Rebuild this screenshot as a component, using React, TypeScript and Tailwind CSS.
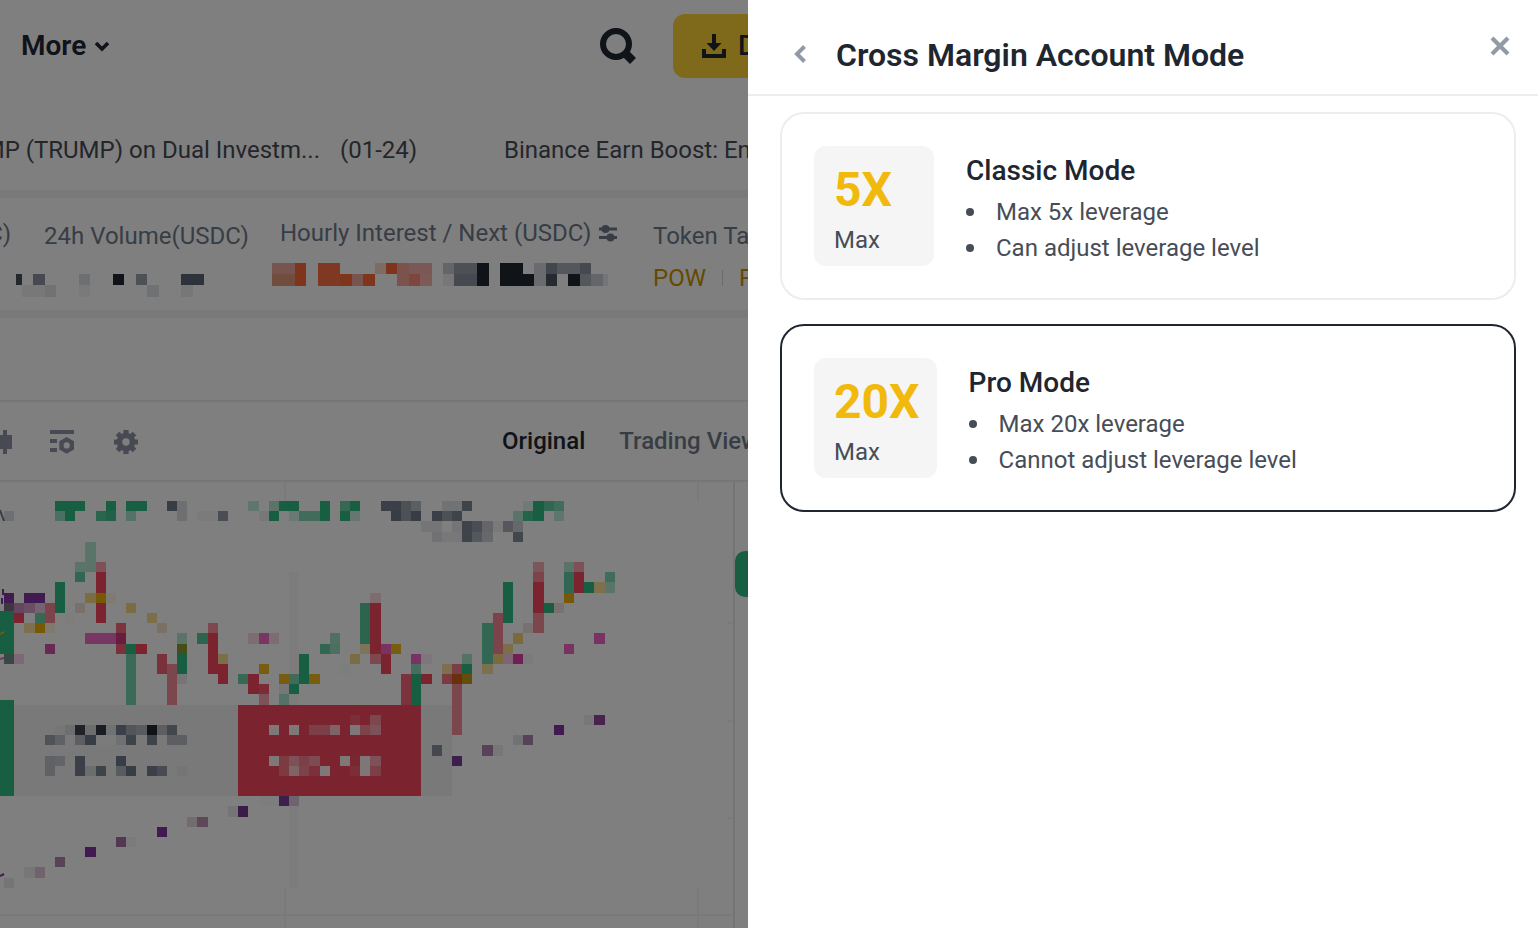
import { useState } from 'react';

type Cell = [x: number, y: number, w: number, h: number, tone: string, opacity?: number];

const GREEN = '#2ebd85';
const RED = '#f6465d';
const GOLD = '#eeb30a';
const PINK = '#f066c4';
const PURPLE = '#8234a4';
const INK = '#202630';
const SLATE = '#707a8a';
const WHITE = '#ffffff';
const CORAL = '#ff6838';

const legendCells: Cell[] = [
  [5, 0, 3, 1, GREEN], [10, 0, 1, 1, GREEN], [12, 0, 2, 1, GREEN], [16, 0, 1, 1, SLATE], [17, 0, 1, 2, SLATE, 0.25],
  [24, 0, 1, 1, GREEN, 0.3], [26, 0, 1, 1, GREEN, 0.35], [27, 0, 2, 1, GREEN],
  [0, 1, 1, 1, SLATE, 0.25], [5, 1, 1, 1, GREEN, 0.5], [6, 1, 1, 1, GREEN], [9, 1, 1, 1, GREEN, 0.8], [10, 1, 1, 1, GREEN, 0.9],
  [12, 1, 1, 1, GREEN, 0.4], [19, 1, 2, 1, SLATE, 0.06], [21, 1, 1, 1, SLATE, 0.75], [25, 1, 1, 1, SLATE, 0.1],
  [26, 1, 1, 1, GREEN], [28, 1, 1, 1, GREEN, 0.2], [29, 1, 2, 1, GREEN, 0.6],
  [31, 0, 1, 2, GREEN], [33, 0, 1, 1, GREEN, 0.7], [34, 0, 1, 1, GREEN], [33, 1, 1, 1, GREEN], [34, 1, 1, 1, GREEN, 0.25],
  [37, 0, 2, 1, SLATE, 0.95], [39, 0, 1, 1, SLATE, 0.7], [40, 0, 1, 1, SLATE, 0.5], [38, 1, 1, 1, SLATE], [39, 1, 1, 1, SLATE, 0.7],
  [40, 1, 1, 1, SLATE], [42, 1, 1, 1, SLATE, 0.95], [43, 1, 1, 1, SLATE, 0.7], [44, 1, 1, 1, SLATE, 0.9],
  [43, 0, 2, 1, SLATE, 0.2], [45, 0, 1, 1, SLATE, 0.9], [41, 2, 2, 1, SLATE, 0.15], [44, 2, 1, 1, SLATE, 0.15],
  [45, 2, 1, 2, SLATE, 0.9], [46, 2, 1, 1, SLATE, 0.75], [47, 2, 1, 1, SLATE, 0.4], [48, 2, 1, 1, SLATE, 0.08],
  [49, 2, 1, 1, SLATE, 0.6], [50, 2, 1, 1, SLATE, 0.35], [42, 3, 1, 1, SLATE, 0.22], [43, 3, 2, 1, SLATE, 0.1],
  [46, 3, 1, 1, SLATE, 0.6], [47, 3, 1, 1, SLATE, 0.35], [50, 3, 1, 1, SLATE, 0.85],
  [51, 0, 1, 1, GREEN, 0.15], [52, 0, 1, 2, GREEN], [53, 0, 1, 1, GREEN, 0.75], [54, 0, 1, 1, GREEN, 0.6],
  [50, 1, 1, 1, GREEN, 0.35], [51, 1, 1, 1, GREEN, 0.85], [54, 1, 1, 1, GREEN, 0.3],
];

const candleCells: Cell[] = [
  [8, 4, 1, 2, GREEN, 0.35], [7, 6, 2, 1, GREEN, 0.35], [9, 6, 1, 1, RED, 0.5], [7, 7, 1, 1, GREEN, 0.75], [9, 7, 1, 5, RED],
  [5, 8, 1, 3, GREEN], [8, 9, 1, 1, GOLD, 0.5], [9, 9, 1, 1, GOLD], [10, 9, 1, 1, GOLD, 0.1], [7, 10, 1, 1, '#c98a5a', 0.25],
  [0, 9, 1, 1, PURPLE], [2, 9, 2, 1, PURPLE], [0, 10, 1, 1, '#5a4a66', 0.8], [1, 10, 1, 1, '#b0509a', 0.65],
  [2, 10, 1, 1, '#b0509a', 0.55], [3, 10, 1, 1, '#b0509a', 0.3], [4, 10, 1, 2, RED, 0.65], [1, 11, 1, 1, RED],
  [3, 11, 1, 1, GREEN, 0.7], [2, 12, 1, 1, GOLD, 0.4], [3, 12, 1, 1, GOLD], [4, 12, 1, 1, GOLD, 0.15], [6, 11, 1, 1, GOLD, 0.05],
  [-1, 10.8, 2, 4.2, GREEN], [0, 15, 1, 1, '#3c6e5c', 0.75], [1, 15, 1, 1, PINK, 0.3], [4, 14, 1, 1, '#d040a0', 0.9],
  [12, 10, 1, 1, GOLD, 0.5], [14, 11, 1, 1, GOLD, 0.45], [15, 12, 1, 1, '#e0b060', 0.35], [8, 13, 3, 1, PINK, 0.95],
  [11, 12, 1, 1, RED, 0.8], [11, 13, 1, 1, '#d03880'], [11, 14, 1, 1, RED, 0.85], [12, 14, 1, 1, GREEN], [13, 14, 1, 1, RED],
  [12, 15, 1, 5, GREEN, 0.65], [15, 15, 1, 2, RED, 0.85], [16, 16, 1, 4, RED, 0.62], [17, 13, 1, 1, GREEN, 0.35],
  [17, 14, 1, 1, '#8a9a30'], [17, 15, 1, 2, GREEN], [17, 17, 1, 1, SLATE, 0.15], [19, 13, 1, 1, GREEN, 0.8],
  [20, 12, 1, 1, RED, 0.6], [20, 13, 1, 4, RED], [21, 15, 1, 1, GOLD, 0.45], [21, 16, 1, 2, RED],
  [23, 17, 1, 1, GREEN, 0.7], [24, 17, 1, 2, RED], [25, 18, 1, 1, RED, 0.9], [25, 19, 1, 1, RED, 0.5],
  [24, 13, 1, 1, RED, 0.2], [25, 13, 1, 1, PINK, 0.95], [26, 13, 1, 1, RED, 0.2], [25, 16, 1, 1, GOLD, 0.9],
  [27, 17, 1, 1, GOLD, 0.9], [28, 17, 1, 1, GREEN, 0.6], [29, 15, 1, 3, GREEN], [30, 17, 1, 1, GOLD, 0.9],
  [27, 18, 1, 1, SLATE, 0.12], [28, 18, 1, 1, GREEN], [27, 19, 1, 1, GREEN, 0.4], [32, 13, 1, 1, GREEN, 0.45],
  [31, 14, 1, 1, GREEN, 0.75], [32, 14, 1, 1, GREEN, 0.5], [35, 10, 1, 4, GREEN, 0.8], [36, 9, 1, 1, RED, 0.2],
  [36, 10, 1, 5, RED], [35, 14, 1, 1, GOLD, 0.3], [37, 14, 1, 1, PINK], [38, 14, 1, 1, GOLD, 0.9], [34, 15, 1, 1, GOLD, 0.5],
  [36, 15, 1, 1, RED, 0.6], [37, 15, 1, 2, RED], [33, 16, 1, 1, SLATE, 0.04], [40, 15, 1, 1, PINK], [41, 15, 1, 1, PINK, 0.12],
  [40, 16, 1, 1, GREEN, 0.55], [39, 17, 1, 3, RED, 0.82], [40, 17, 1, 3, GREEN], [41, 17, 1, 1, RED],
  [43, 16, 1, 1, GOLD, 0.4], [44, 16, 1, 1, RED, 0.7], [45, 15, 1, 1, GREEN, 0.4], [45, 16, 1, 1, GREEN],
  [43, 17, 1, 1, RED, 0.75], [44, 17, 1, 1, '#d06018'], [45, 17, 1, 1, '#c89a10'],
  [52, 6, 1, 1, RED, 0.45], [52, 7, 1, 1, RED, 0.65], [52, 8, 1, 3, RED], [52, 11, 1, 2, RED, 0.62],
  [55, 6, 1, 1, GREEN, 0.35], [56, 6, 1, 1, RED, 0.5], [55, 7, 1, 2, GREEN, 0.75], [56, 7, 1, 2, RED], [57, 8, 1, 1, GREEN],
  [58, 8, 1, 1, GOLD, 0.4], [59, 7, 1, 1, GREEN, 0.6], [59, 8, 1, 1, GREEN, 0.35], [55, 9, 1, 1, GOLD], [53, 10, 1, 1, GREEN],
  [54, 10, 1, 1, '#d09080', 0.25], [49, 8, 1, 4, GREEN], [48, 11, 1, 4, RED, 0.65], [47, 12, 1, 4, GREEN, 0.72],
  [51, 12, 1, 1, '#d09080', 0.25], [50, 13, 1, 1, GOLD, 0.55], [49, 14, 1, 1, GOLD, 0.45], [48, 15, 1, 1, GOLD, 0.55],
  [49, 15, 1, 1, PINK, 0.35], [50, 15, 1, 1, '#e040a8'], [51, 15, 1, 1, SLATE, 0.06], [47, 16, 1, 1, GOLD, 0.4],
  [58, 13, 1, 1, PINK], [55, 14, 1, 1, PINK],
];

const tradeCells: Cell[] = [
  [1, 20, 22, 9, '#f3f3f3'], [41, 20, 3, 9, '#f3f3f3'], [-1, 19.5, 2, 9.5, GREEN], [23, 20, 18, 9, RED],
  [44, 18, 1, 5, RED, 0.62], [42, 24, 1, 1, SLATE, 0.8],
  [5, 22, 1, 1, SLATE, 0.05], [6, 22, 1, 1, SLATE, 0.18], [7, 22, 1, 1, INK, 0.85], [8, 22, 1, 1, SLATE, 0.2],
  [9, 22, 1, 1, INK, 0.9], [10, 22, 1, 1, SLATE, 0.12], [11, 22, 1, 1, SLATE, 0.95], [12, 22, 1, 1, SLATE, 0.6],
  [13, 22, 1, 1, SLATE, 0.5], [14, 22, 1, 1, INK], [15, 22, 1, 1, SLATE, 0.45], [16, 22, 1, 1, SLATE, 0.85],
  [4, 23, 1, 1, SLATE, 0.65], [5, 23, 1, 1, SLATE, 0.4], [7, 23, 1, 1, SLATE, 0.45], [8, 23, 1, 1, SLATE],
  [9, 23, 2, 1, WHITE, 0.3], [11, 23, 1, 1, SLATE, 0.15], [12, 23, 1, 1, SLATE, 0.9], [14, 23, 1, 1, SLATE, 0.9],
  [16, 23, 2, 1, SLATE, 0.45], [4, 25, 1, 2, SLATE, 0.4], [5, 25, 1, 1, SLATE, 0.35], [7, 25, 1, 2, SLATE, 0.95],
  [11, 25, 1, 1, SLATE], [8, 26, 1, 1, SLATE, 0.2], [9, 26, 1, 1, SLATE, 0.9], [11, 26, 1, 1, SLATE, 0.5],
  [12, 26, 1, 1, SLATE], [14, 26, 1, 1, SLATE, 0.95], [15, 26, 1, 1, SLATE, 0.75], [17, 26, 1, 1, SLATE, 0.06],
  [34, 21, 1, 1, WHITE, 0.12], [36, 21, 1, 1, WHITE, 0.4], [26, 22, 1, 1, WHITE, 0.92], [28, 22, 1, 1, WHITE, 0.92],
  [30, 22, 2, 1, WHITE, 0.3], [32, 22, 1, 1, WHITE, 0.7], [34, 22, 1, 1, WHITE, 0.9], [35, 22, 1, 1, WHITE, 0.35],
  [36, 22, 1, 1, WHITE, 0.5], [26, 25, 1, 1, WHITE, 0.92], [27, 25, 1, 1, WHITE, 0.25], [28, 25, 1, 1, WHITE, 0.5],
  [29, 25, 1, 1, WHITE, 0.3], [30, 25, 1, 1, WHITE, 0.45], [33, 25, 1, 1, WHITE, 0.92], [34, 25, 1, 1, WHITE, 0.05],
  [35, 25, 1, 2, WHITE, 0.9], [36, 25, 1, 1, WHITE, 0.5], [27, 26, 1, 1, WHITE, 0.25], [28, 26, 1, 1, WHITE, 0.7],
  [29, 26, 1, 1, WHITE, 0.35], [30, 26, 1, 1, WHITE, 0.15], [31, 26, 1, 1, WHITE, 0.92], [34, 26, 1, 1, WHITE, 0.12],
  [36, 26, 1, 1, WHITE, 0.3],
];

const averageCells: Cell[] = [
  [27, 29, 1, 1, '#7c3c98'], [28, 29, 1, 1, '#b080b0', 0.4], [25, 29, 2, 1, SLATE, 0.04], [22, 30, 1, 1, SLATE, 0.15],
  [23, 30, 1, 1, '#74388c'], [18, 31, 1, 1, '#c0a0b0', 0.4], [19, 31, 1, 1, '#a8689c', 0.75], [15, 32, 1, 1, PURPLE],
  [11, 33, 1, 1, '#9c6098', 0.9], [12, 33, 1, 1, SLATE, 0.07], [8, 34, 1, 1, PURPLE], [5, 35, 1, 1, '#a070a0', 0.85],
  [2, 36, 1, 1, SLATE, 0.12], [3, 36, 1, 1, '#c080b0', 0.45], [0, 37, 1, 1, SLATE, 0.15],
  [44, 25, 1, 1, '#7c3c98'], [47, 24, 1, 1, '#a070a0', 0.85], [48, 24, 1, 1, SLATE, 0.12], [50, 23, 1, 1, SLATE, 0.2],
  [51, 23, 1, 1, '#a070a0', 0.85], [54, 22, 1, 1, PURPLE], [57, 21, 1, 1, SLATE, 0.1], [58, 21, 1, 1, '#8c3c98', 0.95],
];

const volumeCells: Cell[] = [
  [0, 0, 0.5, 1, '#484f5c'], [1.5, 0, 1, 1, SLATE, 0.8], [0.5, 1, 2, 1, SLATE, 0.1], [2.5, 1, 1, 1, SLATE, 0.2],
  [5.5, 0, 1, 1, SLATE, 0.25], [5.5, 1, 1, 1, SLATE, 0.08], [8.5, 0, 1, 1, INK], [10.5, 0, 1, 1, SLATE, 0.7],
  [11.5, 1, 1, 1, SLATE, 0.22], [14.5, 0, 2, 1, '#5c6574'], [14.5, 1, 1, 1, SLATE, 0.12],
];

const interestCells: Cell[] = [
  [0, 0, 2, 1, '#f0a8a0'], [0, 1, 2, 1, '#e09a78'], [2, 0, 1, 2, CORAL], [4, 0, 2, 2, CORAL, 0.95], [6, 1, 1, 1, CORAL],
  [7, 1, 1, 1, '#f0a8a0'], [8, 1, 1, 1, CORAL], [9, 0, 1, 1, '#f8d8c8'], [10, 0, 1, 1, CORAL], [11, 0, 1, 2, '#f8a498'],
  [12, 0, 2, 1, '#f6b0ac'], [12, 1, 1, 1, '#fa8e80'], [13, 1, 1, 1, '#f8b4ac'],
  [15, 0, 1, 1, SLATE, 0.4], [15, 1, 1, 1, SLATE, 0.12], [16, 0, 2, 1, SLATE, 0.7], [16, 1, 2, 1, SLATE, 0.8],
  [18, 0, 1, 2, INK], [20, 0, 2, 2, INK], [22, 1, 1, 1, INK], [22, 0, 1, 1, WHITE, 0.3], [23, 0, 1, 2, SLATE, 0.3],
  [24, 0, 1, 1, SLATE, 0.85], [24, 1, 1, 1, '#4c5462'], [25, 0, 2, 1, SLATE, 0.6], [27, 0, 1, 1, SLATE, 0.8],
  [25, 1, 1, 1, WHITE, 0.2], [26, 1, 1, 1, INK], [27, 1, 1, 1, SLATE, 0.6], [28, 1, 1, 1, SLATE, 0.4], [29, 1, 0.5, 1, SLATE, 0.15],
];

function Cells({ cells }: { cells: Cell[] }) {
  return (
    <>
      {cells.map(([x, y, w, h, tone, opacity], i) => (
        <rect key={i} x={x} y={y} width={w} height={h} fill={tone} opacity={opacity ?? 1} />
      ))}
    </>
  );
}

function Header() {
  return (
    <header className="flex h-[92px] shrink-0 items-center pl-[21px]">
      <button className="flex items-center gap-2 text-[28px] leading-8 font-semibold">
        More
        <svg className="h-4 w-4" viewBox="0 0 16 16" fill="none" stroke="currentColor" strokeWidth="3.6">
          <path d="M2 5l6 6 6-6" />
        </svg>
      </button>
      <button aria-label="Search" className="mr-[37px] ml-auto shrink-0">
        <svg className="h-9 w-9" viewBox="0 0 36 36" fill="none" stroke="currentColor">
          <circle cx="16" cy="16" r="13" strokeWidth="6" />
          <path d="M24.500 24.500l8.500 8.500" strokeWidth="8.500" />
        </svg>
      </button>
      <button className="flex h-16 w-[75px] shrink-0 items-center gap-3 overflow-hidden rounded-l-xl bg-[#fcd535] pl-[29px] text-[28px] leading-8 font-medium">
        <svg className="h-6 w-6 shrink-0" viewBox="0 0 24 24" fill="currentColor">
          <path d="M10 0h4v9h5.500l-7.500 8-7.500-8H10zM0 15h4v5h16v-5h4v9H0z" />
        </svg>
        Download
      </button>
    </header>
  );
}

function NewsTicker() {
  return (
    <div className="flex h-[98px] shrink-0 items-center pt-[18px] text-2xl whitespace-nowrap text-[#474d57]">
      <a href="#dual" className="flex w-[504px] shrink-0 items-center gap-5">
        <span className="flex w-80 justify-end overflow-hidden">MP (TRUMP) on Dual Investm...</span>
        <span>(01-24)</span>
      </a>
      <a href="#boost" className="shrink-0">Binance Earn Boost: Enjoy</a>
    </div>
  );
}

function Stats() {
  return (
    <section className="flex h-32 shrink-0 border-y-8 border-[#f3f3f3] text-2xl whitespace-nowrap text-[#707a8a]">
      <div className="mr-[5px] flex w-[11px] shrink-0 justify-end overflow-hidden pt-5">(USDC)</div>
      <div className="w-[256px] shrink-0 pt-5">
        <div className="pl-7 leading-9">24h Volume(USDC)</div>
        <svg className="mt-5 h-6 w-[190px]" viewBox="0 0 190 24" shapeRendering="crispEdges">
          <g transform="scale(11.4)"><Cells cells={volumeCells} /></g>
        </svg>
      </div>
      <div className="w-[381px] shrink-0 pt-[17px]">
        <div className="flex items-center gap-2 pl-2 leading-9">
          Hourly Interest / Next (USDC)
          <svg className="h-5 w-[18px]" viewBox="0 0 18 20" fill="currentColor">
            <path d="M0 4.500h18v3H0zM0 13h18v3H0z" />
            <circle cx="6.500" cy="6" r="4" />
            <circle cx="11.500" cy="14.500" r="4" />
          </svg>
        </div>
        <svg className="mt-3 h-6 w-[340px]" viewBox="0 0 340 24" shapeRendering="crispEdges">
          <g transform="scale(11.4)"><Cells cells={interestCells} /></g>
        </svg>
      </div>
      <div className="shrink-0 pt-5">
        <div className="leading-9">Token Tags</div>
        <div className="flex items-center gap-4 pt-[6px] leading-9 text-[#c99400]">
          <a href="#pow">POW</a>
          <span className="h-4 w-px bg-[#d0d4da]" />
          <a href="#payments">Payments</a>
        </div>
      </div>
    </section>
  );
}

function ChartToolbar() {
  return (
    <div className="mt-[82px] flex h-[82px] shrink-0 items-center border-y-2 border-[#eaecef] text-[#8f95a6]">
      <div className="flex items-center pt-[2px]">
        <button aria-label="Candles">
          <svg className="h-6 w-3" viewBox="0 0 12 24" fill="currentColor">
            <path d="M3 0h4v5h5v14H7v5H3v-5H0V5h3z" />
          </svg>
        </button>
        <button aria-label="Indicators" className="ml-[38px]">
          <svg className="h-6 w-6" viewBox="0 0 24 24" fill="currentColor">
            <path d="M0 0h24v4H0zM0 9h7v4H0zM0 18h7v4H0z" />
            <path fillRule="evenodd" d="M16.700 7l7.300 4.200v8.300l-7.300 4.300-7.400-4.300v-8.300zM16.700 12.300a3.100 3.100 0 1 0 0 6.200 3.100 3.100 0 0 0 0-6.200z" />
          </svg>
        </button>
        <button aria-label="Chart settings" className="ml-10">
          <svg className="h-6 w-6" viewBox="-12 -12 24 24" fill="currentColor">
            <circle r="6.500" fill="none" stroke="currentColor" strokeWidth="5.600" />
            {[0, 45, 90, 135].map((angle) => (
              <path key={angle} transform={`rotate(${angle})`} d="M-2.600-12h5.200v4h-5.200zM-2.600 8h5.200v4h-5.200z" />
            ))}
          </svg>
        </button>
      </div>
      <div className="ml-auto flex w-[246px] shrink-0 gap-[34px] overflow-hidden text-2xl font-medium whitespace-nowrap">
        <button className="text-[#202630]">Original</button>
        <button className="text-[#707a8a]">Trading View</button>
      </div>
    </div>
  );
}

function Chart() {
  return (
    <svg className="block h-[446px] w-[748px] shrink-0" viewBox="0 482 748 446">
      <g fill="#f4f5f6">
        <path d="M284 482h2v19h-2zM284 888h2v40h-2zM697 482h2v19h-2zM697 888h2v40h-2zM0 914h734v2H0z" />
        <path d="M727 622h6v2h-6zM727 720h6v2h-6zM727 817h6v2h-6z" />
      </g>
      <path d="M733 482h2v446h-2z" fill="#e6e8ec" />
      <path d="M289 572h10v133h-10zM289 796h10v92h-10z" fill="#f9f9f9" />
      <g transform="translate(4 501) scale(10.18)" shapeRendering="crispEdges">
        <Cells cells={legendCells} />
        <Cells cells={tradeCells} />
        <Cells cells={candleCells} />
        <Cells cells={averageCells} />
      </g>
      <g fill="none" strokeWidth="2">
        <path d="M0 510l4 11" stroke={SLATE} />
        <path d="M3 589v6M2 598v6" stroke={PURPLE} />
        <path d="M0 634l4-2" stroke={GOLD} />
        <path d="M0 659l4-1" stroke={PINK} />
        <path d="M0 876l4-2" stroke={PURPLE} />
      </g>
      <rect x="735" y="551" width="40" height="46" rx="10" fill={GREEN} />
    </svg>
  );
}

const modes = [
  { id: 'classic', name: 'Classic Mode', max: '5X', points: ['Max 5x leverage', 'Can adjust leverage level'] },
  { id: 'pro', name: 'Pro Mode', max: '20X', points: ['Max 20x leverage', 'Cannot adjust leverage level'] },
];

function ModeDrawer() {
  const [selected, setSelected] = useState('pro');

  return (
    <aside className="w-[790px] shrink-0 bg-white text-[#202630]">
      <div className="flex h-24 border-b-2 border-[#ededed] pr-[26px] pl-10">
        <div className="flex flex-1 items-center gap-6 pt-4">
          <button aria-label="Back" className="text-[#929aa5]">
            <svg className="h-6 w-6" viewBox="0 0 24 24" fill="none" stroke="currentColor" strokeWidth="4">
              <path d="M16.500 3.500L9 11l7.500 7.500" />
            </svg>
          </button>
          <h2 className="text-[32px] leading-10 font-semibold">Cross Margin Account Mode</h2>
        </div>
        <button aria-label="Close" className="mt-[34px] self-start text-[#929aa5]">
          <svg className="h-6 w-6" viewBox="0 0 24 24" fill="none" stroke="currentColor" strokeWidth="4.200">
            <path d="M4 4l16 16M20 4L4 20" />
          </svg>
        </button>
      </div>
      <div className="flex flex-col gap-6 pt-4 pr-[22px] pl-8">
        {modes.map((m) => (
          <label key={m.id}
            className={`flex cursor-pointer gap-8 rounded-3xl border-2 p-8 ${selected === m.id ? 'border-[#202630]' : 'border-[#ededed]'}`}>
            <input type="radio" name="mode" className="sr-only" checked={selected === m.id} onChange={() => setSelected(m.id)} />
            <div className="h-[120px] min-w-[120px] rounded-xl bg-[#f5f5f5] pt-4 pr-[17px] pl-5">
              <div className="text-5xl leading-[56px] font-bold text-[#f0b90b]">{m.max}</div>
              <div className="text-2xl leading-[44px] text-[#474d57]">Max</div>
            </div>
            <div className="pt-[2px]">
              <h3 className="text-[28px] leading-[46px] font-medium">{m.name}</h3>
              <ul className="text-2xl leading-9 text-[#474d57]">
                {m.points.map((point) => (
                  <li key={point} className="flex items-center gap-[22px]">
                    <span className="h-2 w-2 rounded-full bg-[#474d57]" />
                    {point}
                  </li>
                ))}
              </ul>
            </div>
          </label>
        ))}
      </div>
    </aside>
  );
}

export default function App() {
  return (
    <div className="flex h-screen overflow-hidden bg-white font-[Roboto,'Liberation_Sans',sans-serif]">
      <main className="relative flex min-w-0 flex-1 flex-col overflow-hidden text-[#202630]">
        <Header />
        <NewsTicker />
        <Stats />
        <ChartToolbar />
        <Chart />
        <div className="absolute inset-0 bg-black/50" />
      </main>
      <ModeDrawer />
    </div>
  );
}
